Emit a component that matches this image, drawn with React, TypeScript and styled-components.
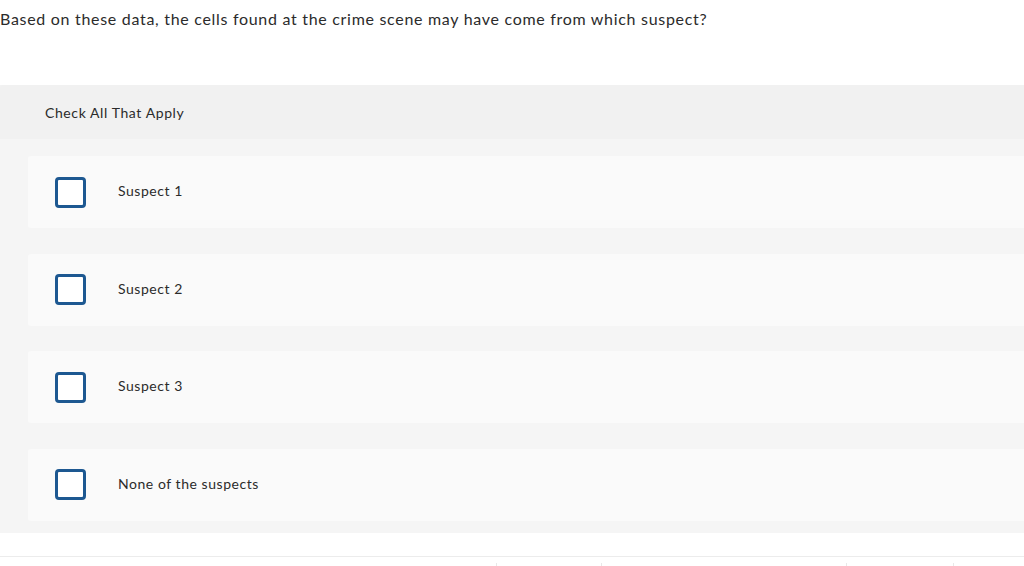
import React from "react";
import styled, { createGlobalStyle } from "styled-components";

const Global = createGlobalStyle`
  html, body { margin: 0; padding: 0; background: #fff; }
  body { font-family: Lato, "Open Sans", "Liberation Sans", sans-serif; color: #2b2b2b; overflow: hidden; }
`;

const Page = styled.div`
  width: 1024px;
  height: 566px;
  display: flex;
  flex-direction: column;
  overflow: hidden;
`;

const Question = styled.p`
  margin: 0;
  padding: 9px 0 0 0;
  font-size: 16px;
  line-height: 20px;
  letter-spacing: 0.7px;
  height: 85px;
  box-sizing: border-box;
  flex: none;
`;

const Panel = styled.section`
  background: #f5f5f5;
  display: flex;
  flex-direction: column;
  padding-bottom: 12px;
  flex: none;
`;

const Header = styled.div`
  background: #f1f1f1;
  height: 54px;
  display: flex;
  align-items: center;
  padding-left: 45px;
  font-size: 14px;
  letter-spacing: 0.6px;
  border-radius: 2px 0 0 0;
`;

const Options = styled.div`
  display: flex;
  flex-direction: column;
  gap: 25.67px;
  padding: 17px 0 0 28px;
`;

const Option = styled.label`
  background: #fafafa;
  height: 72px;
  display: flex;
  align-items: center;
  padding-left: 27px;
  gap: 32px;
  border-radius: 3px 0 0 3px;
  font-size: 14px;
  line-height: 16px;
  letter-spacing: 0.55px;
  cursor: pointer;
`;

const Box = styled.span`
  width: 31px;
  height: 31px;
  box-sizing: border-box;
  border: 3px solid #1d5891;
  border-radius: 4px;
  background: #fff;
  flex: none;
`;

const Label = styled.span`
  margin-top: -2px;
`;

const Footer = styled.div`
  margin-top: 23px;
  border-top: 1px solid #ececec;
  height: 10px;
  position: relative;
  flex: none;
`;

const Tick = styled.span<{ $x: number }>`
  position: absolute;
  left: ${(p) => p.$x}px;
  top: 6px;
  width: 1px;
  height: 4px;
  background: #e8e8e8;
`;

const options = ["Suspect 1", "Suspect 2", "Suspect 3", "None of the suspects"];

export default function App() {
  return (
    <Page>
      <Global />
      <Question>Based on these data, the cells found at the crime scene may have come from which suspect?</Question>
      <Panel>
        <Header>Check All That Apply</Header>
        <Options>
          {options.map((o) => (
            <Option key={o}>
              <Box />
              <Label>{o}</Label>
            </Option>
          ))}
        </Options>
      </Panel>
      <Footer>
        {[496, 601, 846, 953].map((x) => (
          <Tick key={x} $x={x} />
        ))}
      </Footer>
    </Page>
  );
}
